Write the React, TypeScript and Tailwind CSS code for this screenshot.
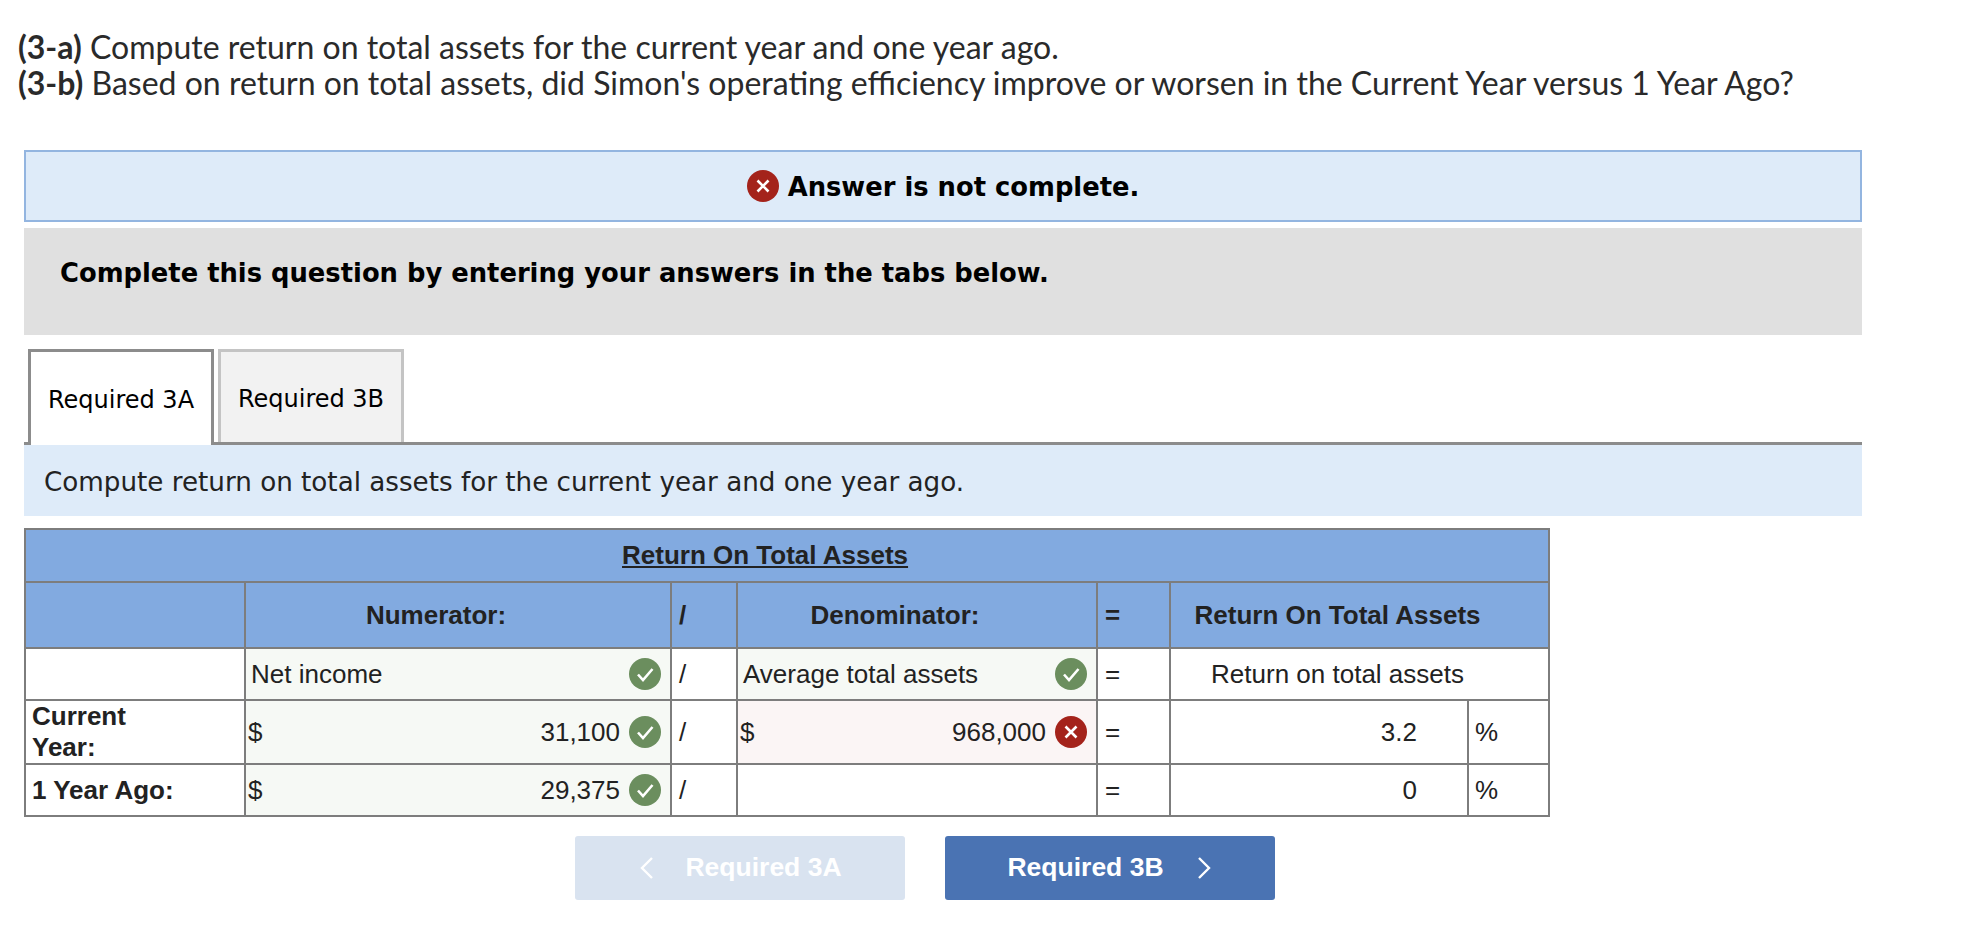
const Check = () => (
  <svg viewBox="0 0 32 32" className="w-8 h-8 shrink-0">
    <circle cx="16" cy="16" r="16" fill="#6b8e5e" />
    <path d="M9 16.5l5 5.5 9.5-11" fill="none" stroke="#fff" strokeWidth="2.6" />
  </svg>
);

const Cross = ({ size = "w-8 h-8" }: { size?: string }) => (
  <svg viewBox="0 0 32 32" className={`${size} shrink-0`}>
    <circle cx="16" cy="16" r="16" fill="#a4231b" />
    <path d="M10.5 10.5l11 11M21.5 10.5l-11 11" fill="none" stroke="#fff" strokeWidth="2.6" />
  </svg>
);

const Chevron = ({ left }: { left?: boolean }) => (
  <svg viewBox="0 0 16 26" className="w-4 h-[26px]" fill="none" stroke="#fff" strokeWidth="2.4">
    <path d={left ? "M14 3L4 13l10 10" : "M2 3l10 10L2 23"} />
  </svg>
);

const cell = "border-2 border-[#7d7d7d] p-0";

const Money = ({ value, ok, bad }: { value: string; ok?: boolean; bad?: boolean }) => (
  <div className="flex items-center pl-[2px] pr-[9px]">
    <span>$</span>
    <span className="ml-auto mr-[9px]">{value}</span>
    {ok && <Check />}
    {bad && <Cross />}
  </div>
);

export default function App() {
  return (
    <div className="w-[1976px] h-[928px] overflow-hidden bg-white text-[#222] font-['Liberation_Sans',sans-serif]">
      <div className="pt-[29px] pl-[18px] font-['Lato',sans-serif] text-[32px] leading-[36px] text-[#2a2a2a] whitespace-nowrap">
        <p><b>(3-a)</b> Compute return on total assets for the current year and one year ago.</p>
        <p><b>(3-b)</b> Based on return on total assets, did Simon's operating efficiency improve or worsen in the Current Year versus 1 Year Ago?</p>
      </div>

      <div className="ml-6 w-[1838px] mt-[49px] font-['DejaVu_Sans',sans-serif] text-black">
        <div className="h-[72px] bg-[#deebf9] border-2 border-[#93b5e0] flex items-center justify-center gap-[9px] text-[25.8px] font-bold">
          <Cross />
          <span className="pt-[3px]">Answer is not complete.</span>
        </div>
        <div className="mt-[6px] h-[107px] bg-[#e0e0e0] pl-9 pt-[29px] text-[25.8px] leading-[32px] font-bold">
          Complete this question by entering your answers in the tabs below.
        </div>

        <div className="mt-[14px] h-[96px] flex items-end gap-[4px] pl-1 border-b-[3px] border-[#8c8c8c] text-[24px]">
          <div className="w-[186px] h-[96px] -mb-[3px] pt-[2px] bg-white border-[3px] border-b-0 border-[#8c8c8c] flex items-center justify-center">
            Required 3A
          </div>
          <div className="w-[186px] h-[93px] pt-[3px] bg-[#f2f2f2] border-[3px] border-b-0 border-[#c4c4c4] flex items-center justify-center">
            Required 3B
          </div>
        </div>
        <div className="h-[71px] bg-[#deebf9] pl-5 pt-[4px] flex items-center text-[26.2px] text-[#222]">
          Compute return on total assets for the current year and one year ago.
        </div>
      </div>

      <table className="ml-6 mt-3 w-[1524px] table-fixed border-collapse text-[26px] text-[#222]">
        <colgroup>
          <col className="w-[220px]" />
          <col className="w-[426px]" />
          <col className="w-[66px]" />
          <col className="w-[360px]" />
          <col className="w-[73px]" />
          <col className="w-[298px]" />
          <col className="w-[81px]" />
        </colgroup>
        <tbody>
          <tr className="h-[53px] bg-[#82aae0] font-bold">
            <td colSpan={7} className={`${cell} text-center pr-[44px]`}>
              <span className="underline">Return On Total Assets</span>
            </td>
          </tr>
          <tr className="h-[66px] bg-[#82aae0] font-bold">
            <td className={cell}></td>
            <td className={`${cell} text-center pr-[44px]`}>Numerator:</td>
            <td className={`${cell} pl-[7px]`}>/</td>
            <td className={`${cell} text-center pr-[44px]`}>Denominator:</td>
            <td className={`${cell} pl-[7px]`}>=</td>
            <td colSpan={2} className={`${cell} text-center pr-[44px]`}>Return On Total Assets</td>
          </tr>
          <tr className="h-[52px]">
            <td className={cell}></td>
            <td className={`${cell} bg-[#f6f9f5]`}>
              <div className="flex items-center justify-between pl-[5px] pr-[9px]">
                <span>Net income</span>
                <Check />
              </div>
            </td>
            <td className={`${cell} pl-[7px]`}>/</td>
            <td className={`${cell} bg-[#f6f9f5]`}>
              <div className="flex items-center justify-between pl-[5px] pr-[9px]">
                <span>Average total assets</span>
                <Check />
              </div>
            </td>
            <td className={`${cell} pl-[7px]`}>=</td>
            <td colSpan={2} className={`${cell} text-center pr-[44px]`}>Return on total assets</td>
          </tr>
          <tr className="h-[64px]">
            <td className={`${cell} pl-[6px] pr-24 font-bold leading-[31px]`}>Current Year:</td>
            <td className={`${cell} bg-[#f6f9f5]`}><Money value="31,100" ok /></td>
            <td className={`${cell} pl-[7px]`}>/</td>
            <td className={`${cell} bg-[#fbf5f5]`}><Money value="968,000" bad /></td>
            <td className={`${cell} pl-[7px]`}>=</td>
            <td className={`${cell} text-right pr-[50px]`}>3.2</td>
            <td className={`${cell} pl-[6px]`}>%</td>
          </tr>
          <tr className="h-[52px]">
            <td className={`${cell} pl-[6px] font-bold`}>1 Year Ago:</td>
            <td className={`${cell} bg-[#f6f9f5]`}><Money value="29,375" ok /></td>
            <td className={`${cell} pl-[7px]`}>/</td>
            <td className={cell}></td>
            <td className={`${cell} pl-[7px]`}>=</td>
            <td className={`${cell} text-right pr-[50px]`}>0</td>
            <td className={`${cell} pl-[6px]`}>%</td>
          </tr>
        </tbody>
      </table>

      <div className="ml-[575px] mt-[19px] flex gap-10 text-[26.5px] font-bold text-white">
        <div className="w-[330px] h-16 rounded-[3px] bg-[#d9e3f0] flex items-center justify-center gap-[31px]">
          <Chevron left />
          <span>Required 3A</span>
        </div>
        <div className="w-[330px] h-16 rounded-[3px] bg-[#4a73b3] flex items-center justify-center gap-[33px]">
          <span>Required 3B</span>
          <Chevron />
        </div>
      </div>
    </div>
  );
}
